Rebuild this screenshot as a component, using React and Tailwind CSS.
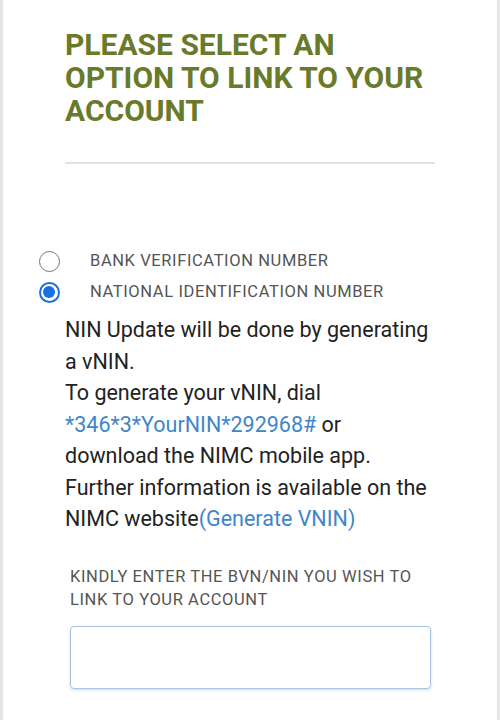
import { useState } from "react";

const App = () => {
  const [choice, setChoice] = useState("nin");

  const options = [
    { id: "bvn", label: "BANK VERIFICATION NUMBER" },
    { id: "nin", label: "NATIONAL IDENTIFICATION NUMBER" },
  ];

  return (
    <div className="min-h-[720px] w-[500px] bg-white font-['Roboto',sans-serif]">
      <div className="min-h-[720px] border-l-[3px] border-r-[3px] border-[#e4e4e4] pt-[28px]">
        <h1 className="ml-[62px] whitespace-nowrap text-[30px] font-bold leading-[33px] text-[#6a7a2b]">
          PLEASE SELECT AN
          <br />
          OPTION TO LINK TO YOUR
          <br />
          ACCOUNT
        </h1>
        <hr className="ml-[62px] mr-[62px] mt-[35px] border-t-2 border-[#e2e2e2]" />

        <div className="mt-[85px] flex flex-col gap-[7px]">
          {options.map((o) => (
            <label key={o.id} className="flex items-center">
              <span className="ml-[35px] flex w-[22px] justify-center">
                <span
                  className={
                    choice === o.id
                      ? "flex h-[21px] w-[21px] items-center justify-center rounded-full border-2 border-[#1a6fe0] bg-white"
                      : "h-[21px] w-[21px] rounded-full border border-[#767676] bg-white"
                  }
                  onClick={() => setChoice(o.id)}
                >
                  {choice === o.id && <span className="h-[12px] w-[12px] rounded-full bg-[#1a6fe0]" />}
                </span>
              </span>
              <span className="ml-[30px] text-[16.5px] leading-[24px] tracking-[0.6px] text-[#555]">{o.label}</span>
            </label>
          ))}
        </div>

        <p className="ml-[62px] mt-[10px] whitespace-nowrap text-[21.5px] leading-[31.5px] text-[#222]">
          NIN Update will be done by generating
          <br />
          a vNIN.
          <br />
          To generate your vNIN, dial
          <br />
          <span className="text-[#3f86c8]">*346*3*YourNIN*292968#</span> or
          <br />
          download the NIMC mobile app.
          <br />
          Further information is available on the
          <br />
          NIMC website<span className="text-[#3f86c8]">(Generate VNIN)</span>
        </p>

        <div className="ml-[67px] mt-[30px] whitespace-nowrap text-[16.5px] leading-[23px] tracking-[0.6px] text-[#555]">
          KINDLY ENTER THE BVN/NIN YOU WISH TO
          <br />
          LINK TO YOUR ACCOUNT
        </div>
        <input
          type="text"
          className="ml-[67px] mt-[15px] h-[63px] w-[361px] rounded-[4px] border border-[#a9c3de] shadow-[0_1px_3px_rgba(100,150,210,0.35)] outline-none"
        />
      </div>
    </div>
  );
};

export default App;
